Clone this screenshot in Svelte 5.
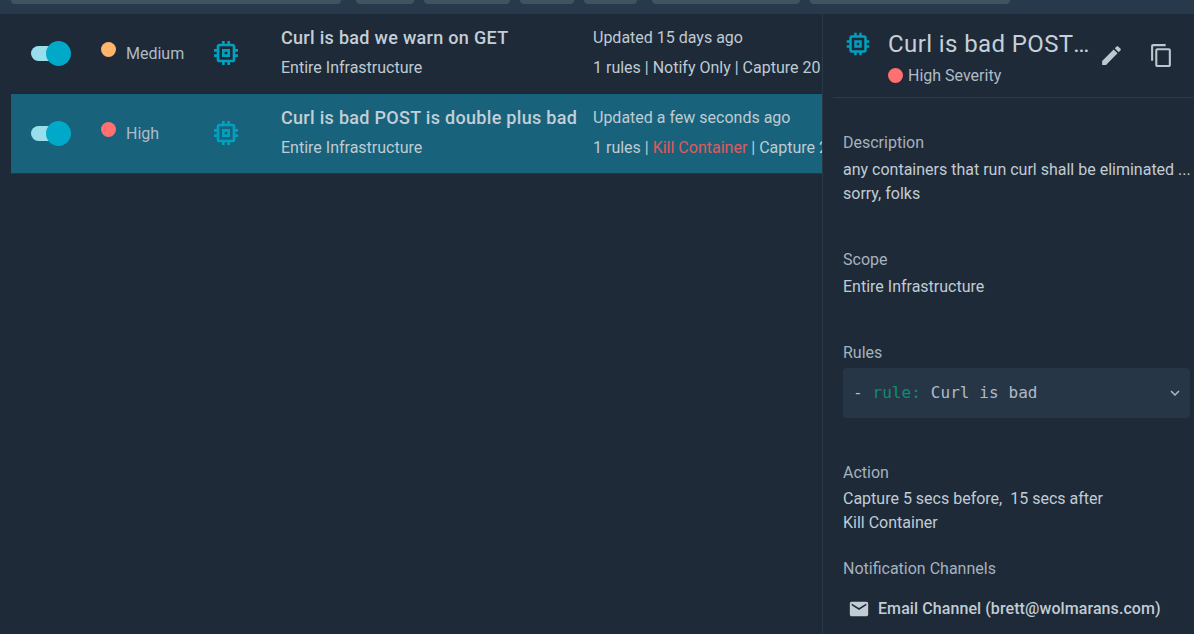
<script lang="ts">
  // Policy list rows
  const policies = [
    {
      title: 'Curl is bad we warn on GET',
      severity: 'Medium',
      level: 'medium',
      updated: 'Updated 15 days ago',
      scope: 'Entire Infrastructure',
      action: 'Notify Only',
      kill: false,
      capture: 'Capture 20 secs before, 15 secs after',
      selected: false
    },
    {
      title: 'Curl is bad POST is double plus bad',
      severity: 'High',
      level: 'high',
      updated: 'Updated a few seconds ago',
      scope: 'Entire Infrastructure',
      action: 'Kill Container',
      kill: true,
      capture: 'Capture 20 secs before, 15 secs after',
      selected: true
    }
  ];

  const topPills = [
    { left: 11, width: 330 },
    { left: 356, width: 58 },
    { left: 424, width: 86 },
    { left: 520, width: 54 },
    { left: 584, width: 53 },
    { left: 652, width: 148 },
    { left: 810, width: 200 }
  ];
</script>

{#snippet chip()}
  <svg class="chip" viewBox="0 0 24 24" aria-hidden="true">
    <path d="M15 9H9v6h6V9zm-2 4h-2v-2h2v2zm8-2V9h-2V7c0-1.100-.9-2-2-2h-2V3h-2v2h-2V3H9v2H7c-1.100 0-2 .9-2 2v2H3v2h2v2H3v2h2v2c0 1.100.9 2 2 2h2v2h2v-2h2v2h2v-2h2c1.100 0 2-.9 2-2v-2h2v-2h-2v-2h2zm-4 6H7V7h10v10z" fill="currentColor" />
  </svg>
{/snippet}

<div class="page">
  <header class="filters">
    {#each topPills as pill, i}
      <span class="pill" style="width: {pill.width}px; margin-left: {i === 0 ? 11 : pill.left - topPills[i - 1].left - topPills[i - 1].width}px"></span>
    {/each}
  </header>

  <div class="body">
    <section class="list">
      {#each policies as p}
        <div class="row" class:selected={p.selected}>
          <div class="toggle"><span class="track"></span><span class="knob"></span></div>
          <div class="sev">
            <span class="dot {p.level}"></span>
            <span class="sev-name">{p.severity}</span>
          </div>
          <div class="kind">{@render chip()}</div>
          <div class="main">
            <div class="title">{p.title}</div>
            <div class="sub">{p.scope}</div>
          </div>
          <div class="meta">
            <div class="updated">{p.updated}</div>
            <div class="sub nowrap">1 rules | <span class:kill={p.kill}>{p.action}</span> | {p.capture}</div>
          </div>
        </div>
      {/each}
    </section>

    <aside class="detail">
      <div class="head">
        <div class="head-icon">{@render chip()}</div>
        <div class="head-text">
          <div class="head-title">Curl is bad POST is double plus bad</div>
          <div class="head-sev"><span class="dot high"></span>High Severity</div>
        </div>
        <svg class="action edit" viewBox="0 0 24 24" aria-hidden="true">
          <path d="M3 17.250V21h3.750L17.810 9.940l-3.750-3.750L3 17.250zM20.710 7.040a1 1 0 0 0 0-1.410l-2.340-2.340a1 1 0 0 0-1.410 0l-1.830 1.830 3.750 3.750 1.830-1.830z" fill="currentColor" />
        </svg>
        <svg class="action copy" viewBox="0 0 24 24" aria-hidden="true">
          <path d="M16 1H4c-1.100 0-2 .9-2 2v14h2V3h12V1zm3 4H8c-1.100 0-2 .9-2 2v14c0 1.100.9 2 2 2h11c1.100 0 2-.9 2-2V7c0-1.100-.9-2-2-2zm0 16H8V7h11v14z" fill="currentColor" />
        </svg>
      </div>

      <div class="content">
        <div class="field desc">
          <div class="label">Description</div>
          <div class="value">any containers that run curl shall be eliminated ... sorry, folks</div>
        </div>
        <div class="field scope">
          <div class="label">Scope</div>
          <div class="value">Entire Infrastructure</div>
        </div>
        <div class="field rules">
          <div class="label">Rules</div>
          <div class="code">
            <span class="code-text"><span class="dash">-</span> <span class="key">rule:</span> Curl is bad</span>
            <svg viewBox="0 0 24 24" width="18" height="18" aria-hidden="true">
              <path d="M7.410 8.590 12 13.170l4.590-4.580L18 10l-6 6-6-6z" fill="currentColor" />
            </svg>
          </div>
        </div>
        <div class="field action-field">
          <div class="label">Action</div>
          <div class="value">Capture 5 secs before,&nbsp; 15 secs after</div>
          <div class="value">Kill Container</div>
        </div>
        <div class="field channels">
          <div class="label">Notification Channels</div>
          <div class="channel">
            <svg viewBox="0 0 24 24" width="22" height="22" aria-hidden="true">
              <path d="M20 4H4c-1.100 0-2 .9-2 2v12c0 1.100.9 2 2 2h16c1.100 0 2-.9 2-2V6c0-1.100-.9-2-2-2zm0 4-8 5-8-5V6l8 5 8-5v2z" fill="currentColor" />
            </svg>
            <span>Email Channel (brett@wolmarans.com)</span>
          </div>
        </div>
      </div>
    </aside>
  </div>
</div>

<style>
  :global(body) {
    margin: 0;
    background: #1e2a38;
    overflow: hidden;
  }

  .page {
    width: 1194px;
    height: 634px;
    overflow: hidden;
    font-family: Roboto, "Liberation Sans", sans-serif;
    color: #c5d0d8;
    background: #1e2a38;
  }

  .filters {
    height: 14px;
    background: #27394a;
    display: flex;
    align-items: flex-start;
    overflow: hidden;
  }

  .pill {
    flex: none;
    height: 4px;
    background: #3f5363;
    border-radius: 0 0 4px 4px;
  }

  .body {
    display: flex;
    height: 620px;
  }

  .list {
    width: 822px;
    flex: none;
    overflow: hidden;
    padding-left: 11px;
    box-sizing: border-box;
  }

  .row {
    height: 80px;
    display: flex;
    align-items: flex-start;
    white-space: nowrap;
  }

  .row.selected {
    background: #18637b;
    height: 79px;
    border-bottom: 1px solid #1a3b4e;
  }

  .row:not(.selected) {
    border-bottom: 1px solid #1b2734;
    box-sizing: border-box;
  }

  .toggle {
    position: relative;
    width: 40px;
    height: 25px;
    margin: 27px 0 0 20px;
    flex: none;
  }

  .track {
    position: absolute;
    left: 0;
    top: 5px;
    width: 30px;
    height: 15px;
    border-radius: 8px;
    background: #99dfeb;
  }

  .knob {
    position: absolute;
    left: 15px;
    top: 0;
    width: 25px;
    height: 25px;
    border-radius: 50%;
    background: #00a9c8;
  }

  .sev {
    width: 109px;
    margin: 28px 0 0 30px;
    flex: none;
    display: flex;
    font-size: 16px;
    color: #aebbc6;
  }

  .sev-name {
    margin: 2px 0 0 10px;
    line-height: 19px;
  }

  .dot {
    display: inline-block;
    width: 15px;
    height: 15px;
    border-radius: 50%;
    flex: none;
  }

  .dot.medium {
    background: #ffb56b;
  }

  .dot.high {
    background: #ff7070;
  }

  .kind {
    width: 71px;
    flex: none;
    margin-top: 23px;
    color: #00a0be;
  }

  .chip {
    display: block;
    width: 32px;
    height: 32px;
  }

  .main {
    width: 312px;
    flex: none;
    padding-top: 13px;
  }

  .title {
    font-size: 18px;
    font-weight: 500;
    line-height: 21px;
    letter-spacing: 0.3px;
    color: #c3cfd8;
  }

  .sub {
    font-size: 16px;
    line-height: 19px;
    margin-top: 10px;
    color: #bfcbd3;
  }

  .meta {
    flex: 1;
    min-width: 0;
    overflow: hidden;
    padding-top: 14px;
  }

  .updated {
    font-size: 16px;
    line-height: 19px;
    color: #bfcbd3;
  }

  .meta .sub {
    margin-top: 11px;
  }

  .kill {
    color: #e0595b;
  }

  .detail {
    width: 372px;
    flex: none;
    border-left: 1px solid #2a3947;
    box-sizing: border-box;
    padding-left: 10px;
    overflow: hidden;
  }

  .head {
    height: 83px;
    display: flex;
    align-items: flex-start;
    border-bottom: 1px solid #2c3a47;
  }

  .head-icon {
    color: #00a0be;
    width: 45px;
    flex: none;
    margin: 15px 0 0 10px;
  }

  .head-icon .chip {
    width: 30px;
    height: 30px;
  }

  .head-text {
    width: 206px;
    flex: none;
    padding-top: 16px;
  }

  .head-title {
    font-size: 24px;
    line-height: 29px;
    letter-spacing: 0.4px;
    color: #c5d0d8;
    white-space: nowrap;
    overflow: hidden;
    text-overflow: ellipsis;
  }

  .head-sev {
    display: flex;
    align-items: center;
    gap: 5px;
    font-size: 16px;
    line-height: 19px;
    margin-top: 7px;
    color: #aebbc6;
  }

  .action {
    color: #bcc8d0;
    flex: none;
    width: 25px;
    height: 25px;
  }

  .edit {
    margin: 29px 0 0 5px;
  }

  .copy {
    margin: 29px 0 0 25px;
  }

  .content {
    width: 351px;
    padding-left: 10px;
    font-size: 16px;
    line-height: 24px;
  }

  .label {
    color: #a5b2bd;
    line-height: 19px;
  }

  .value {
    color: #c1ccd4;
  }

  .desc {
    padding-top: 35px;
  }

  .desc .label {
    margin-bottom: 6px;
  }

  .scope {
    padding-top: 44px;
  }

  .scope .label {
    margin-bottom: 6px;
  }

  .rules {
    padding-top: 44px;
  }

  .code {
    margin-top: 6px;
    width: 347px;
    box-sizing: border-box;
    height: 50px;
    background: #263647;
    border-radius: 4px;
    display: flex;
    align-items: center;
    justify-content: space-between;
    padding: 0 6px 0 10px;
    font-family: "DejaVu Sans Mono", "Liberation Mono", monospace;
    font-size: 16px;
    letter-spacing: 0.08px;
    color: #aebbc6;
  }

  .key {
    color: #0b8e6e;
  }

  .action-field {
    padding-top: 45px;
  }

  .action-field .label {
    margin-bottom: 5px;
  }

  .channels {
    padding-top: 24px;
  }

  .channel {
    display: flex;
    align-items: center;
    margin: 20px 0 0 5px;
    gap: 8px;
    font-weight: 500;
    letter-spacing: 0.08px;
    color: #c1ccd4;
    line-height: 22px;
  }
</style>
